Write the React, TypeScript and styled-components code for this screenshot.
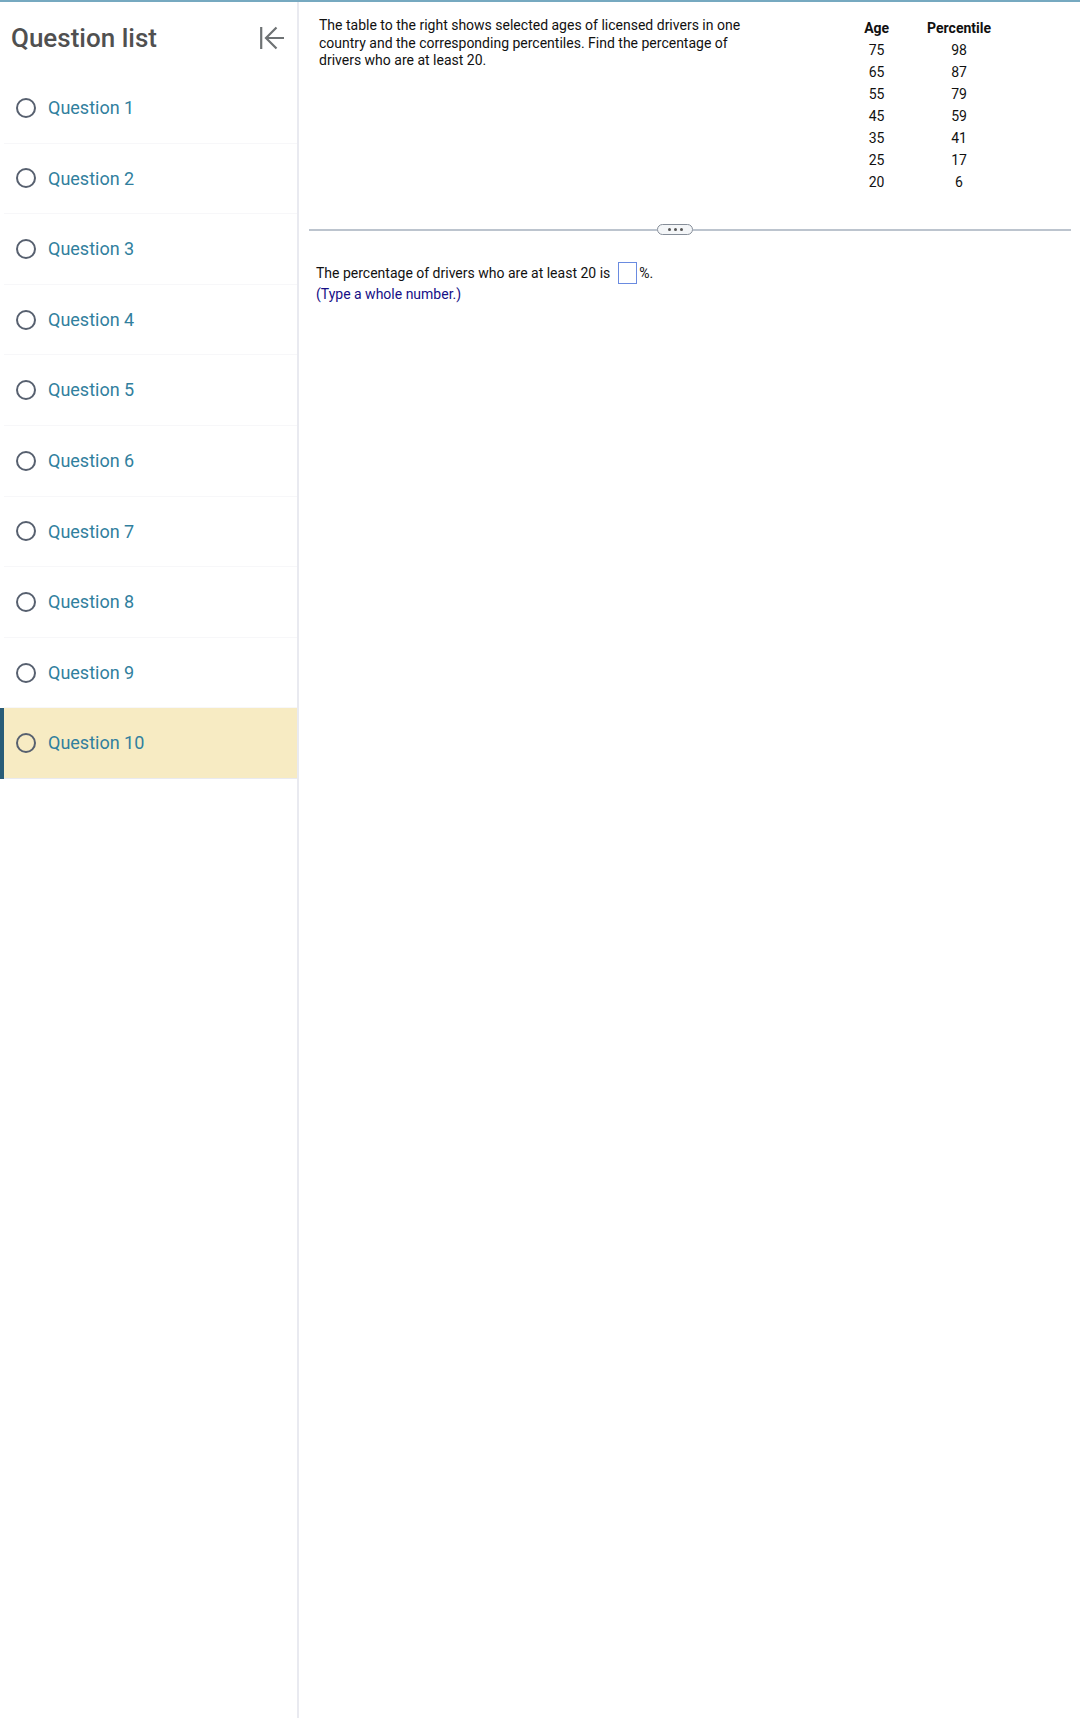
import React, { useState } from "react";
import styled, { createGlobalStyle } from "styled-components";

const GlobalStyle = createGlobalStyle`
  *, *::before, *::after { box-sizing: border-box; }
  body {
    margin: 0;
    background: #fff;
    font-family: Roboto, "Liberation Sans", sans-serif;
    color: #111;
  }
`;

const Page = styled.div`
  display: flex;
  min-height: 100vh;
  border-top: 2px solid #76a9c0;
`;

const Sidebar = styled.aside`
  flex: 0 0 299px;
  border-right: 2px solid #e9eaf0;
`;

const SidebarHeader = styled.header`
  display: flex;
  align-items: center;
  justify-content: space-between;
  height: 71px;
  padding: 0 13px 0 11px;
`;

const Title = styled.h2`
  margin: 0;
  font-size: 26px;
  line-height: 32px;
  font-weight: 500;
  color: #505050;
`;

const CollapseButton = styled.button`
  display: flex;
  padding: 0;
  border: 0;
  background: none;
  color: #6e7274;
  cursor: pointer;
`;

const List = styled.ol`
  margin: 0;
  padding: 0;
  list-style: none;
`;

const Item = styled.li<{ $active: boolean }>`
  border-left: 4px solid ${(p) => (p.$active ? "#295c77" : "transparent")};
  background: ${(p) => (p.$active ? "#f7ebc3" : "transparent")};
`;

const ItemLink = styled.a<{ $active: boolean }>`
  display: flex;
  align-items: center;
  gap: 12px;
  padding: 24px 12px;
  border-bottom: 1px solid ${(p) => (p.$active ? "#e9eaf0" : "#f7f7f9")};
  font-size: 18px;
  line-height: 1.2;
  color: #317f9e;
  text-decoration: none;
`;

const Ring = styled.span`
  width: 20px;
  height: 20px;
  border: 2px solid #57606f;
  border-radius: 50%;
`;

const Main = styled.main`
  flex: 1;
  min-width: 0;
  padding: 15px 9px 0 10px;
  font-size: 14px;
`;

const Problem = styled.section`
  display: flex;
  justify-content: space-between;
  align-items: flex-start;
  padding: 0 61px 0 10px;
`;

const Prompt = styled.p`
  margin: 0;
  max-width: 450px;
  line-height: 1.25;
`;

const DataTable = styled.table`
  border-collapse: collapse;
  line-height: 22px;
  text-align: center;
  th, td { padding: 0 19px; }
`;

const Divider = styled.div`
  display: flex;
  align-items: center;
  margin-top: 31px;
  &::before, &::after {
    content: "";
    flex: 12;
    height: 2px;
    background: #bcc4ce;
  }
  &::after { flex: 13; }
`;

const Handle = styled.button`
  display: flex;
  align-items: center;
  justify-content: center;
  gap: 3px;
  width: 36px;
  height: 11px;
  padding: 0;
  border: 1px solid #858d98;
  border-radius: 6px;
  background: #f4f6f8;
  cursor: pointer;
`;

const Dot = styled.span`
  width: 3px;
  height: 3px;
  border-radius: 50%;
  background: #555;
`;

const Answer = styled.section`
  padding: 27px 7px 0;
`;

const AnswerLine = styled.div`
  display: flex;
  align-items: center;
  line-height: 22px;
`;

const AnswerInput = styled.input`
  width: 19px;
  height: 22px;
  margin: 0 2px 0 8px;
  padding: 0;
  border: 1px solid #6a8be0;
  border-radius: 0;
  font: inherit;
  text-align: center;
  outline: none;
`;

const Hint = styled.p`
  margin: 0;
  line-height: 20px;
  color: #160f86;
`;

const data = [
  [75, 98],
  [65, 87],
  [55, 79],
  [45, 59],
  [35, 41],
  [25, 17],
  [20, 6],
];

const questions = Array.from({ length: 10 }, (_, i) => i + 1);

export default function App() {
  const [current, setCurrent] = useState(10);
  const [answer, setAnswer] = useState("");

  return (
    <>
      <GlobalStyle />
      <Page>
        <Sidebar>
          <SidebarHeader>
            <Title>Question list</Title>
            <CollapseButton type="button" aria-label="Collapse question list">
              <svg width="24" height="24" viewBox="0 0 24 24" fill="none" stroke="currentColor" strokeWidth="2.2">
                <path d="M1.2 1v22M24 12H6M16.5 1.5L6 12 16.5 22.5" />
              </svg>
            </CollapseButton>
          </SidebarHeader>
          <List>
            {questions.map((n) => (
              <Item key={n} $active={n === current}>
                <ItemLink
                  href={`#question-${n}`}
                  $active={n === current}
                  onClick={() => setCurrent(n)}
                >
                  <Ring />
                  Question {n}
                </ItemLink>
              </Item>
            ))}
          </List>
        </Sidebar>
        <Main>
          <Problem>
            <Prompt>
              The table to the right shows selected ages of licensed drivers in one country and the
              corresponding percentiles. Find the percentage of drivers who are at least 20.
            </Prompt>
            <DataTable>
              <thead>
                <tr>
                  <th scope="col">Age</th>
                  <th scope="col">Percentile</th>
                </tr>
              </thead>
              <tbody>
                {data.map(([age, percentile]) => (
                  <tr key={age}>
                    <td>{age}</td>
                    <td>{percentile}</td>
                  </tr>
                ))}
              </tbody>
            </DataTable>
          </Problem>
          <Divider>
            <Handle type="button" aria-label="Resize panels">
              <Dot />
              <Dot />
              <Dot />
            </Handle>
          </Divider>
          <Answer>
            <AnswerLine>
              <label htmlFor="answer">The percentage of drivers who are at least 20 is</label>
              <AnswerInput
                id="answer"
                type="text"
                inputMode="numeric"
                value={answer}
                onChange={(e) => setAnswer(e.target.value)}
              />
              %.
            </AnswerLine>
            <Hint>(Type a whole number.)</Hint>
          </Answer>
        </Main>
      </Page>
    </>
  );
}
